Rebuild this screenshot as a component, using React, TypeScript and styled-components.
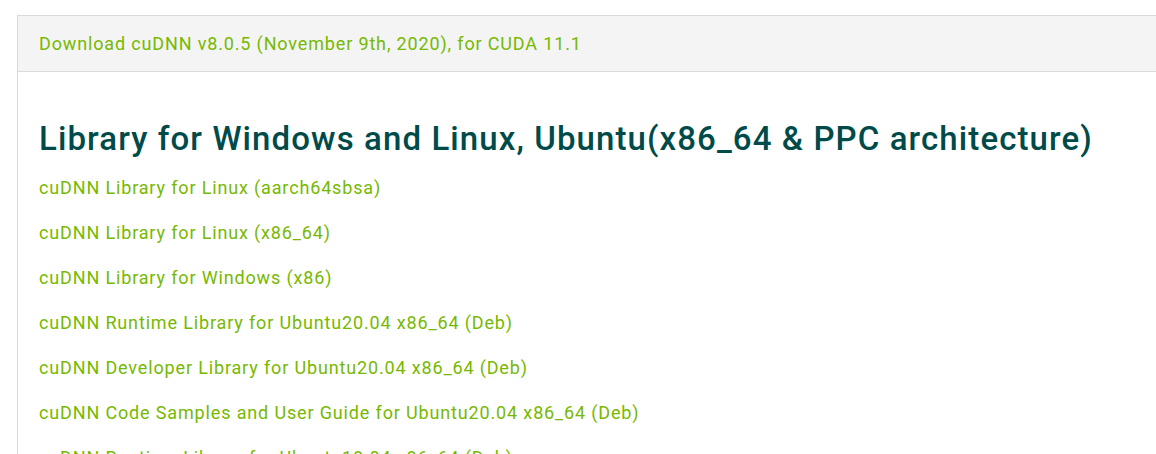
import * as React from "react"
import styled, { createGlobalStyle } from "styled-components";

const GlobalStyle = createGlobalStyle`
  html, body {
    margin: 0;
    padding: 0;
    background: #FFFFFF;
  }
  body {
    font-family: Roboto, "Liberation Sans", sans-serif;
  }
`

export const Page = styled.div`
  padding: 15px 0 0 17px;
  width: 1156px;
  height: 454px;
  box-sizing: border-box;
  overflow: hidden;
`

export const Panel = styled.div`
  border-top: 1px solid #DADADA;
  border-left: 1px solid #DADADA;
  width: 1200px;
`

export const Header = styled.div`
  height: 55px;
  background: #F4F4F4;
  border-bottom: 1px solid #DADADA;
  display: flex;
  align-items: center;
  padding-left: 21px;
`

export const GreenLink = styled.a`
  color: #76B900;
  font-size: 18px;
  letter-spacing: 0.85px;
  text-decoration: none;
  cursor: pointer;
`

export const Body = styled.div`
  padding: 47px 0 0 21px;
  display: flex;
  flex-direction: column;
`

export const Heading = styled.h2`
  margin: 0 0 6px;
  font-size: 33px;
  font-weight: 500;
  letter-spacing: 1.1px;
  line-height: 40px;
  color: #004B49;
`

export const LinkRow = styled.div`
  height: 45px;
  display: flex;
  align-items: center;
`

const links = [
    "cuDNN Library for Linux (aarch64sbsa)",
    "cuDNN Library for Linux (x86_64)",
    "cuDNN Library for Windows (x86)",
    "cuDNN Runtime Library for Ubuntu20.04 x86_64 (Deb)",
    "cuDNN Developer Library for Ubuntu20.04 x86_64 (Deb)",
    "cuDNN Code Samples and User Guide for Ubuntu20.04 x86_64 (Deb)",
    "cuDNN Runtime Library for Ubuntu18.04 x86_64 (Deb)",
]

const App = () => {
    return (
        <>
            <GlobalStyle />
            <Page>
                <Panel>
                    <Header>
                        <GreenLink>Download cuDNN v8.0.5 (November 9th, 2020), for CUDA 11.1</GreenLink>
                    </Header>
                    <Body>
                        <Heading>Library for Windows and Linux, Ubuntu(x86_64 &amp; PPC architecture)</Heading>
                        {links.map((l) => (
                            <LinkRow key={l}>
                                <GreenLink>{l}</GreenLink>
                            </LinkRow>
                        ))}
                    </Body>
                </Panel>
            </Page>
        </>
    )
}

export default App
